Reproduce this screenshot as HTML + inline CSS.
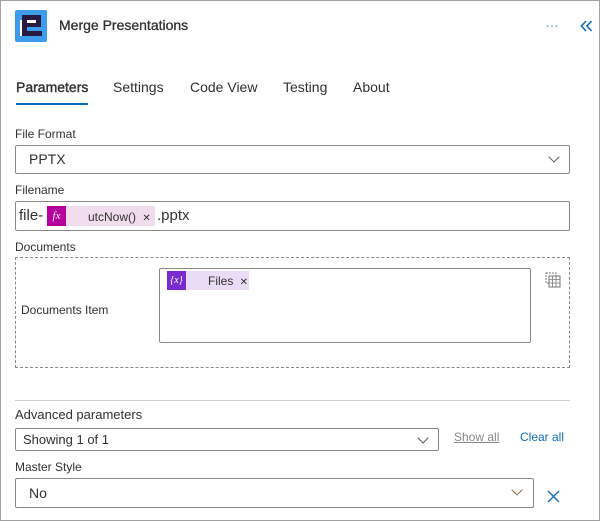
<!DOCTYPE html>
<html><head><meta charset="utf-8"><style>
*{box-sizing:border-box;margin:0;padding:0}
body{width:600px;height:521px;overflow:hidden;background:#fff;font-family:"Liberation Sans",sans-serif;color:#323130;position:relative}
.frame{position:absolute;left:0;top:0;width:600px;height:521px;border:1px solid #a0a0a0}
.a{position:absolute;white-space:nowrap}
.lbl{font-size:12px;color:#323130}
.box{position:absolute;border:1px solid #8a8886;border-radius:2px;background:#fff}
.chev{position:absolute;width:8px;height:8px;border-right:1.3px solid #605e5c;border-bottom:1.3px solid #605e5c;transform:rotate(45deg)}
.tab{position:absolute;top:79px;font-size:14px;color:#323130}
</style></head><body>
<div class="frame"></div>
<svg class="a" style="left:15px;top:10px" width="32" height="32" viewBox="0 0 32 32">
<rect width="32" height="32" rx="2" fill="#3b9cf0"/>
<path d="M7 5H26V17H12V21H27V26H7Z" fill="#2b1a3f"/>
<rect x="12" y="10" width="9" height="3" fill="#fff"/>
<rect x="5" y="10" width="2" height="16" fill="#fff"/>
</svg>
<div class="a" style="left:59px;top:17px;font-size:14px;color:#323130;-webkit-text-stroke:0.3px #323130">Merge Presentations</div>
<svg class="a" style="left:546px;top:24px" width="12" height="4"><circle cx="1.5" cy="2" r="0.9" fill="#6aa8e0"/><circle cx="6" cy="2" r="0.9" fill="#6aa8e0"/><circle cx="10.5" cy="2" r="0.9" fill="#6aa8e0"/></svg>
<svg class="a" style="left:580px;top:20px" width="13" height="12" viewBox="0 0 13 12"><path d="M6 1L1.5 6L6 11M11.5 1L7 6L11.5 11" fill="none" stroke="#0f6cbd" stroke-width="1.6"/></svg>

<div class="tab" style="left:16px;-webkit-text-stroke:0.4px #323130">Parameters</div>
<div class="tab" style="left:113px">Settings</div>
<div class="tab" style="left:190px">Code View</div>
<div class="tab" style="left:283px">Testing</div>
<div class="tab" style="left:353px">About</div>
<div class="a" style="left:16px;top:103px;width:72px;height:2px;background:#0f6cbd"></div>

<div class="a lbl" style="left:15px;top:127px">File Format</div>
<div class="box" style="left:15px;top:145px;width:555px;height:29px"></div>
<div class="a" style="left:29px;top:151px;font-size:14px">PPTX</div>
<div class="chev" style="left:550px;top:153px"></div>

<div class="a lbl" style="left:15px;top:183px">Filename</div>
<div class="box" style="left:15px;top:201px;width:555px;height:30px"></div>
<div class="a" style="left:19px;top:207px;font-size:15px">file-</div>
<div class="a" style="left:47px;top:206px;width:19px;height:20px;background:#b4009e;color:#fff;font-family:'Liberation Serif',serif;font-style:italic;font-size:11px;text-align:center;line-height:20px">fx</div>
<div class="a" style="left:66px;top:206px;width:89px;height:20px;background:#f1dcee;font-size:12px;line-height:22px;padding-left:22px">utcNow() <span style="font-size:10px;margin-left:3px">✕</span></div>
<div class="a" style="left:157px;top:207px;font-size:15px">.pptx</div>

<div class="a lbl" style="left:15px;top:240px">Documents</div>
<div class="a" style="left:15px;top:257px;width:555px;height:111px;border:1px dashed #8a8886"></div>
<div class="a lbl" style="left:21px;top:303px">Documents Item</div>
<div class="box" style="left:159px;top:268px;width:372px;height:75px"></div>
<div class="a" style="left:167px;top:271px;width:19px;height:19px;background:#7a2bcf;color:#fff;font-family:'Liberation Serif',serif;font-style:italic;font-size:10px;text-align:center;line-height:19px">{x}</div>
<div class="a" style="left:186px;top:271px;width:63px;height:19px;background:#eadcf6;font-size:12px;line-height:21px;padding-left:22px">Files <span style="font-size:10px;margin-left:3px">✕</span></div>
<svg class="a" style="left:545px;top:272px" width="16" height="16" viewBox="0 0 16 16"><rect x="1" y="1" width="10" height="10" fill="none" stroke="#797775" stroke-dasharray="2 1"/><rect x="4" y="4" width="11" height="11" fill="#fff" stroke="#797775"/><path d="M4 7.5H15M4 11H15M7.5 4V15M11 4V15" stroke="#797775" stroke-width=".8"/></svg>

<div class="a" style="left:15px;top:400px;width:555px;height:1px;background:#d2d0ce"></div>
<div class="a" style="left:15px;top:407px;font-size:13px">Advanced parameters</div>
<div class="box" style="left:15px;top:428px;width:424px;height:23px"></div>
<div class="a" style="left:23px;top:432px;font-size:13px">Showing 1 of 1</div>
<div class="chev" style="left:419px;top:434px"></div>
<div class="a" style="left:454px;top:430px;font-size:12px;color:#8a8886;text-decoration:underline">Show all</div>
<div class="a" style="left:520px;top:430px;font-size:12px;color:#0f6cbd">Clear all</div>

<div class="a lbl" style="left:15px;top:460px">Master Style</div>
<div class="box" style="left:15px;top:478px;width:519px;height:30px"></div>
<div class="a" style="left:29px;top:485px;font-size:14px">No</div>
<div class="chev" style="left:513px;top:486px;border-color:#a16a3a"></div>
<svg class="a" style="left:547px;top:490px" width="13" height="13" viewBox="0 0 13 13"><path d="M1 1L12 12M12 1L1 12" stroke="#0f6cbd" stroke-width="1.3"/></svg>
</body></html>
